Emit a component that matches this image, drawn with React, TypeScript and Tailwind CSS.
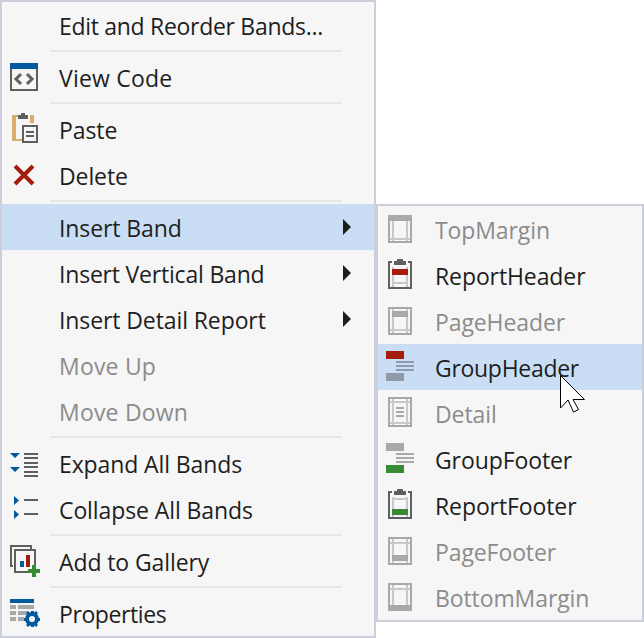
const GRAY = "#5f5f5f";
const LIGHT = "#a8a8a8";
const PALE = "#c9c9c9";
const BLUE = "#005a9e";
const RED = "#a31d0a";
const GREEN = "#388a34";
const TAN = "#d8ae6f";
const SLATE = "#8f99a8";
const PANEL = "#f6f6f6";

function Icon({ children }: { children: React.ReactNode }) {
  return (
    <svg width="32" height="32" viewBox="0 0 32 32" className="shrink-0" shapeRendering="crispEdges">
      {children}
    </svg>
  );
}

const icons: Record<string, React.ReactNode> = {
  code: (
    <Icon>
      <rect x="3" y="3" width="26" height="26" fill="none" stroke={GRAY} strokeWidth="2" />
      <rect x="2" y="2" width="28" height="6" fill={BLUE} />
      <path d="M13 13l-5 5 5 5M19 13l5 5-5 5" fill="none" stroke={GRAY} strokeWidth="3" shapeRendering="auto" />
    </Icon>
  ),
  paste: (
    <Icon>
      <path d="M4 2h6v2H8v22h6v2H4z" fill={TAN} />
      <rect x="22" y="2" width="4" height="8" fill={TAN} />
      <path d="M10 2h3V0h4v2h3v4H10z" fill={GRAY} />
      <rect x="15" y="13" width="14" height="16" fill={PANEL} stroke={GRAY} strokeWidth="2" />
      <rect x="18" y="18" width="8" height="2" fill={GRAY} />
      <rect x="18" y="22" width="8" height="2" fill={GRAY} />
    </Icon>
  ),
  del: (
    <Icon>
      <path d="M7 7l18 18M25 7L7 25" stroke={RED} strokeWidth="4" fill="none" shapeRendering="auto" />
    </Icon>
  ),
  expand: (
    <Icon>
      <path d="M2 6h10l-5 5zM2 20h10l-5 5z" fill={BLUE} shapeRendering="auto" />
      {[6, 10, 15, 19, 24, 28].map((y) => (
        <rect key={y} x="16" y={y} width="14" height="2" fill={GRAY} />
      ))}
    </Icon>
  ),
  collapse: (
    <Icon>
      <path d="M6 3l5 4.500-5 4.500zM6 17l5 4.500-5 4.500z" fill={BLUE} shapeRendering="auto" />
      <rect x="16" y="6" width="14" height="2" fill={GRAY} />
      <rect x="16" y="20" width="14" height="2" fill={GRAY} />
    </Icon>
  ),
  gallery: (
    <Icon>
      <path d="M5 21H3V1h20v3" fill="none" stroke={GRAY} strokeWidth="2" />
      <rect x="7" y="5" width="20" height="22" fill={PANEL} stroke={GRAY} strokeWidth="2" />
      <rect x="12" y="16" width="4" height="6" fill={BLUE} />
      <rect x="18" y="10" width="4" height="12" fill={RED} />
      <rect x="24" y="20" width="4" height="12" fill={GREEN} />
      <rect x="20" y="24" width="12" height="4" fill={GREEN} />
    </Icon>
  ),
  props: (
    <Icon>
      <rect x="2" y="2" width="24" height="4" fill={BLUE} />
      <path d="M2 8h6v4H2zM10 8h16v4H10zM2 14h6v4H2zM10 14h10v4H10zM2 20h6v4H2zM10 20h6v4H10z" fill={LIGHT} />
      <circle cx="24" cy="22" r="5" fill="none" stroke={BLUE} strokeWidth="4" shapeRendering="auto" />
      <path d="M22.500 14h3v3h-3zM22.500 27h3v3h-3zM16 20.500h3v3h-3zM29 20.500h3v3h-3z" fill={BLUE} />
      <path d="M18 16l2-2 3 3-2 2zM30 28l-2 2-3-3 2-2zM30 16l-2-2-3 3 2 2zM18 28l2 2 3-3-2-2z" fill={BLUE} shapeRendering="auto" />
    </Icon>
  ),
};

function BandFrame({ children }: { children?: React.ReactNode }) {
  return (
    <Icon>
      <rect x="5" y="3" width="22" height="26" fill="none" stroke={LIGHT} strokeWidth="2" />
      <rect x="8" y="4" width="2" height="24" fill={PALE} />
      <rect x="22" y="4" width="2" height="24" fill={PALE} />
      {children}
    </Icon>
  );
}

function ReportIcon({ bar, top }: { bar: string; top: boolean }) {
  return (
    <Icon>
      <path d="M8 3H5v26h22V3h-3" fill="none" stroke={GRAY} strokeWidth="2" />
      <path d="M10 2h3V0h6v2h3v4H10z" fill={GRAY} />
      <rect x="8" y="8" width="2" height="20" fill={PALE} />
      <rect x="22" y="8" width="2" height="20" fill={PALE} />
      <rect x="8" y={top ? 10 : 20} width="16" height="6" fill={bar} />
      <rect x="8" y={top ? 23 : 9} width="16" height="2" fill={PALE} />
    </Icon>
  );
}

function GroupIcon({ first, last, lines }: { first: string; last: string; lines: string }) {
  return (
    <Icon>
      <rect x="2" y="0" width="18" height="8" fill={first} />
      <rect x="12" y="10" width="18" height="2" fill={lines} />
      <rect x="12" y="14" width="18" height="2" fill={lines} />
      <rect x="12" y="18" width="18" height="2" fill={lines} />
      <rect x="2" y="22" width="18" height="8" fill={last} />
    </Icon>
  );
}

const bandIcons: Record<string, React.ReactNode> = {
  top: (
    <BandFrame>
      <rect x="4" y="2" width="24" height="6" fill={LIGHT} />
      <rect x="6" y="25" width="20" height="2" fill={PALE} />
    </BandFrame>
  ),
  rh: <ReportIcon bar={RED} top />,
  ph: (
    <BandFrame>
      <rect x="8" y="6" width="16" height="6" fill={LIGHT} />
      <rect x="6" y="24" width="20" height="2" fill={PALE} />
    </BandFrame>
  ),
  gh: <GroupIcon first={RED} last={SLATE} lines={SLATE} />,
  detail: (
    <Icon>
      <rect x="5" y="1" width="22" height="28" fill="none" stroke={LIGHT} strokeWidth="2" />
      <rect x="8" y="2" width="2" height="26" fill={PALE} />
      <rect x="22" y="2" width="2" height="26" fill={PALE} />
      <rect x="6" y="4" width="20" height="2" fill={PALE} />
      <rect x="12" y="10" width="8" height="2" fill={LIGHT} />
      <rect x="12" y="14" width="8" height="2" fill={LIGHT} />
      <rect x="12" y="18" width="8" height="2" fill={LIGHT} />
      <rect x="6" y="25" width="20" height="2" fill={PALE} />
    </Icon>
  ),
  gf: <GroupIcon first={LIGHT} last={GREEN} lines={LIGHT} />,
  rf: <ReportIcon bar={GREEN} top={false} />,
  pf: (
    <BandFrame>
      <rect x="6" y="7" width="20" height="2" fill={PALE} />
      <rect x="8" y="20" width="16" height="6" fill={LIGHT} />
    </BandFrame>
  ),
  bm: (
    <BandFrame>
      <rect x="6" y="7" width="20" height="2" fill={PALE} />
      <rect x="4" y="24" width="24" height="6" fill={LIGHT} />
    </BandFrame>
  ),
};

type Item = {
  label?: string;
  icon?: string;
  arrow?: boolean;
  disabled?: boolean;
  active?: boolean;
  sep?: boolean;
  tracking?: string;
};

const mainItems: Item[] = [
  { label: "Edit and Reorder Bands...", tracking: "tracking-[-0.3px]" },
  { sep: true },
  { label: "View Code", icon: "code", tracking: "tracking-[0.2px]" },
  { sep: true },
  { label: "Paste", icon: "paste" },
  { label: "Delete", icon: "del" },
  { sep: true },
  { label: "Insert Band", arrow: true, active: true },
  { label: "Insert Vertical Band", arrow: true, tracking: "tracking-[-0.2px]" },
  { label: "Insert Detail Report", arrow: true },
  { label: "Move Up", disabled: true, tracking: "tracking-[0.2px]" },
  { label: "Move Down", disabled: true, tracking: "tracking-[0.2px]" },
  { sep: true },
  { label: "Expand All Bands", icon: "expand" },
  { label: "Collapse All Bands", icon: "collapse" },
  { sep: true },
  { label: "Add to Gallery", icon: "gallery" },
  { sep: true },
  { label: "Properties", icon: "props", tracking: "tracking-[-0.4px]" },
];

const bandItems: Item[] = [
  { label: "TopMargin", icon: "top", disabled: true },
  { label: "ReportHeader", icon: "rh" },
  { label: "PageHeader", icon: "ph", disabled: true },
  { label: "GroupHeader", icon: "gh", active: true, tracking: "tracking-[-0.3px]" },
  { label: "Detail", icon: "detail", disabled: true },
  { label: "GroupFooter", icon: "gf" },
  { label: "ReportFooter", icon: "rf" },
  { label: "PageFooter", icon: "pf", disabled: true },
  { label: "BottomMargin", icon: "bm", disabled: true },
];

function Row({ item, icon }: { item: Item; icon?: React.ReactNode }) {
  return (
    <div className={`flex h-[46px] items-center pl-[6px] ${item.active ? "bg-[#c9def5]" : ""}`}>
      <div className="h-[32px] w-[32px] shrink-0">{icon}</div>
      <span
        className={`ml-[19px] pt-[2px] whitespace-nowrap ${item.tracking ?? ""} ${
          item.disabled ? "text-[#8c8c8c]" : "text-[#1e1e1e]"
        }`}
      >
        {item.label}
      </span>
      {item.arrow && (
        <svg width="8" height="16" viewBox="0 0 8 16" className="ml-auto mr-[23px]">
          <path d="M0 0l8 8-8 8z" fill="#1e1e1e" />
        </svg>
      )}
    </div>
  );
}

export default function App() {
  return (
    <div className="relative flex h-[638px] w-[644px] items-start overflow-hidden bg-white font-['Open_Sans',sans-serif] text-[23px] tracking-[-0.1px]">
      <div className="h-[638px] w-[376px] shrink-0 border-2 border-[#ccceDB] bg-[#f6f6f6]">
        {mainItems.map((item, i) =>
          item.sep ? (
            <div key={i} className="my-[2px] ml-[48px] mr-[32px] h-[2px] bg-[#e6e6e6]" />
          ) : (
            <Row key={i} item={item} icon={item.icon ? icons[item.icon] : undefined} />
          ),
        )}
      </div>
      <div className="mt-[204px] h-[418px] w-[268px] shrink-0 border-2 border-[#ccceDB] bg-[#f6f6f6]">
        {bandItems.map((item, i) => (
          <Row key={i} item={item} icon={item.icon ? bandIcons[item.icon] : undefined} />
        ))}
      </div>
      {/* mouse pointer */}
      <svg width="28" height="40" viewBox="0 0 28 40" className="absolute left-[560px] top-[375px]">
        <path d="M.5.5V33L8 25l5.500 12 5-2.500L13 24.500h11.500z" fill="#fff" stroke="#000" strokeWidth="1" />
      </svg>
    </div>
  );
}
